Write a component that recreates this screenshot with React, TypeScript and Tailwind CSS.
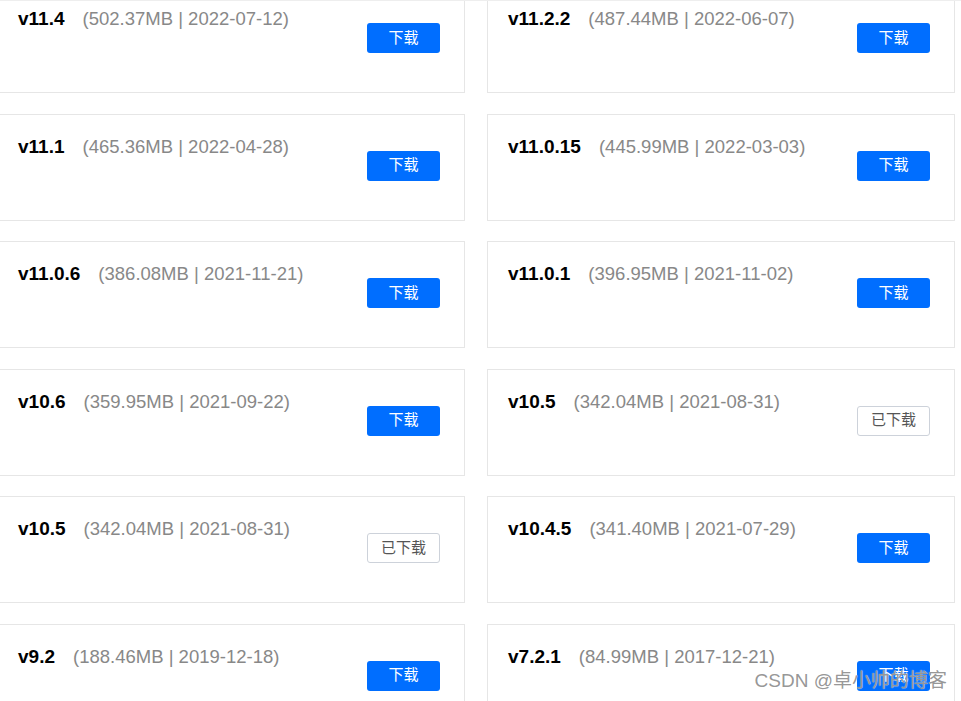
import React from 'react';

interface Release {
  version: string;
  size: string;
  date: string;
  downloaded?: boolean;
}

const releases: Release[] = [
  { version: 'v11.4', size: '502.37MB', date: '2022-07-12' },
  { version: 'v11.2.2', size: '487.44MB', date: '2022-06-07' },
  { version: 'v11.1', size: '465.36MB', date: '2022-04-28' },
  { version: 'v11.0.15', size: '445.99MB', date: '2022-03-03' },
  { version: 'v11.0.6', size: '386.08MB', date: '2021-11-21' },
  { version: 'v11.0.1', size: '396.95MB', date: '2021-11-02' },
  { version: 'v10.6', size: '359.95MB', date: '2021-09-22' },
  { version: 'v10.5', size: '342.04MB', date: '2021-08-31', downloaded: true },
  { version: 'v10.5', size: '342.04MB', date: '2021-08-31', downloaded: true },
  { version: 'v10.4.5', size: '341.40MB', date: '2021-07-29' },
  { version: 'v9.2', size: '188.46MB', date: '2019-12-18' },
  { version: 'v7.2.1', size: '84.99MB', date: '2017-12-21' },
];

function ReleaseCard({ release }: { release: Release }) {
  return (
    <div className="h-[107px] border border-[#e6e6e6] bg-white flex justify-between items-start pl-[20px] pr-[24px] pt-[19px]">
      <div className="flex items-baseline leading-[26px] whitespace-nowrap">
        <span className="text-[19px] font-bold text-black">{release.version}</span>
        <span className="ml-[18px] text-[18.5px] text-[#888888]">
          ({release.size} | {release.date})
        </span>
      </div>
      {release.downloaded ? (
        <button
          type="button"
          className="mt-[17px] w-[73px] h-[30px] rounded-[3px] border border-[#cdd2da] bg-white text-[15px] text-[#555555] flex items-center justify-center"
        >
          已下载
        </button>
      ) : (
        <button
          type="button"
          className="mt-[17px] w-[73px] h-[30px] rounded-[3px] bg-[#006eff] text-[15px] text-white flex items-center justify-center"
        >
          下载
        </button>
      )}
    </div>
  );
}

export default function App() {
  return (
    <div
      className="relative w-[961px] h-[701px] overflow-hidden bg-white border-t border-[#eeeeee]"
      style={{ fontFamily: '"Liberation Sans", "Noto Sans CJK SC", sans-serif' }}
    >
      <div className="-mt-[15px] -ml-[3px] grid grid-cols-[468px_468px] gap-x-[22px] gap-y-[20.5px]">
        {releases.map((r, i) => (
          <ReleaseCard key={i} release={r} />
        ))}
      </div>
      <div className="absolute right-[14px] bottom-[6px] text-[19px] text-[#8a8a8a]/90 whitespace-nowrap [text-shadow:0_0_1px_#fff]">
        CSDN @卓小帅的博客
      </div>
    </div>
  );
}
